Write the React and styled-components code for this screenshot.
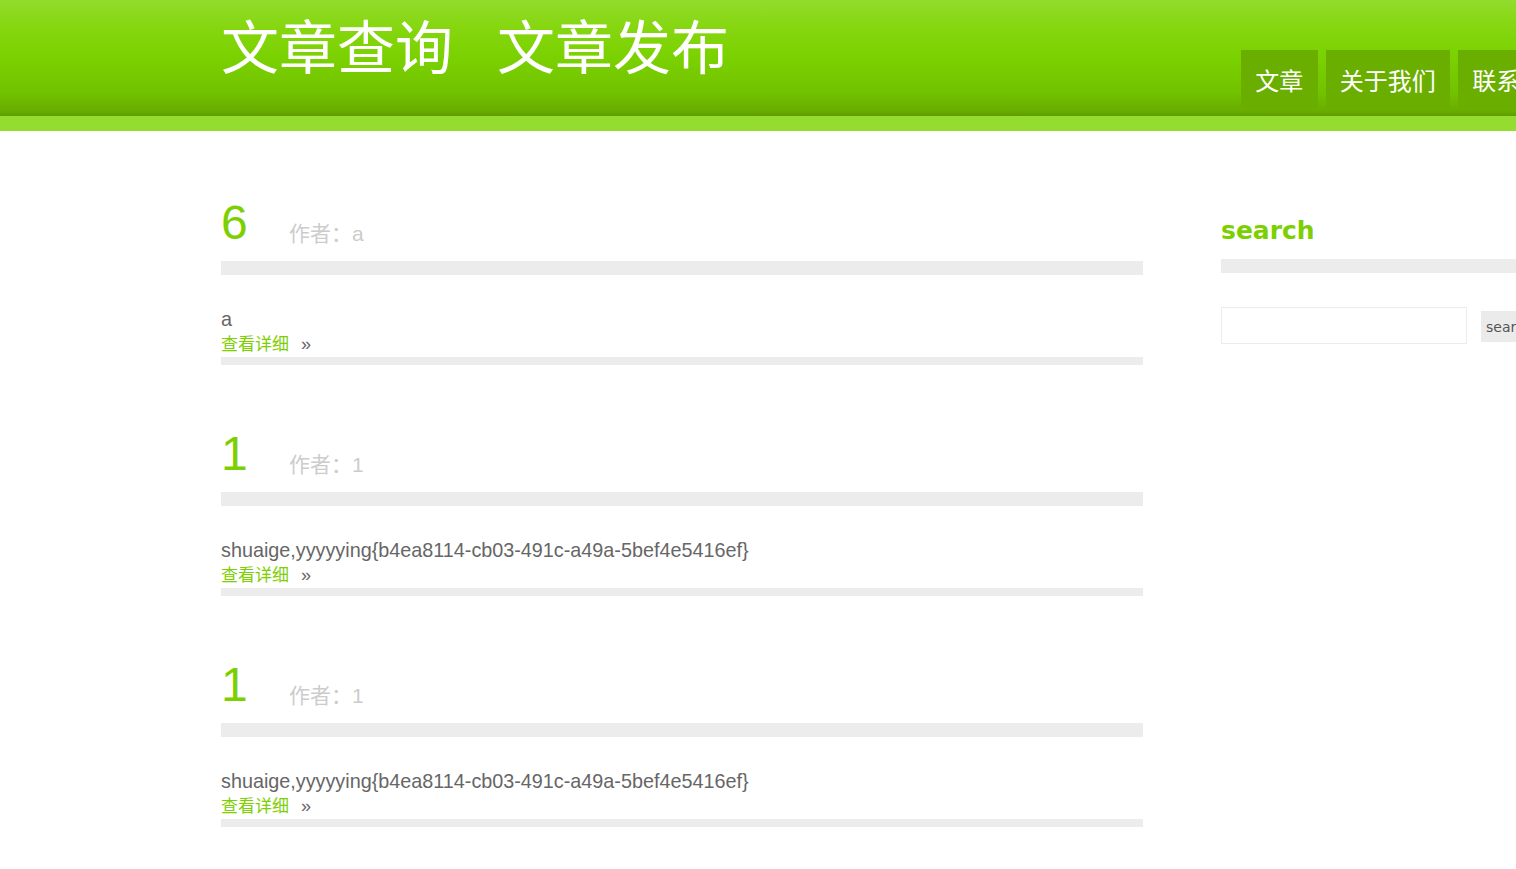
import React from 'react';
import styled, { createGlobalStyle } from 'styled-components';

const posts = [
  { id: 6, author: 'a', body: 'a' },
  { id: 1, author: '1', body: 'shuaige,yyyyying{b4ea8114-cb03-491c-a49a-5bef4e5416ef}' },
  { id: 1, author: '1', body: 'shuaige,yyyyying{b4ea8114-cb03-491c-a49a-5bef4e5416ef}' },
];

const App = () => {
  return (
    <>
      <GlobalStyle />
      <Header>
        <HeaderInner>
          <Brand>
            <BrandLink>文章查询</BrandLink>
            <BrandLink>文章发布</BrandLink>
          </Brand>
          <Nav>
            <NavItem>文章</NavItem>
            <NavItem>关于我们</NavItem>
            <NavItem>联系我们</NavItem>
          </Nav>
        </HeaderInner>
      </Header>
      <Strip />
      <Page>
        <Main>
          {posts.map((p, i) => (
            <Post key={i}>
              <PostTitle>
                <PostNum>{p.id}</PostNum>
                <Author>作者：{p.author}</Author>
              </PostTitle>
              <Bar />
              <Body>{p.body}</Body>
              <More>
                <MoreLink>查看详细</MoreLink>
                <Arrow>»</Arrow>
              </More>
              <ThinBar />
            </Post>
          ))}
        </Main>
        <Sidebar>
          <SideTitle>search</SideTitle>
          <SideBar />
          <SearchRow>
            <SearchInput />
            <SearchButton>search</SearchButton>
          </SearchRow>
        </Sidebar>
      </Page>
    </>
  );
};

const GlobalStyle = createGlobalStyle`
  html, body {
    margin: 0;
    padding: 0;
    background: #fff;
    overflow-x: hidden;
  }
  body {
    font-family: "Liberation Sans", "Noto Sans CJK SC", sans-serif;
  }
`;

const Header = styled.div`
  height: 116px;
  background: linear-gradient(to bottom, #92dc2c 0%, #85d60e 25%, #7ad100 50%, #72c200 80%, #68ac00 96%, #5e9c00 100%);
  overflow: hidden;
`;

const HeaderInner = styled.div`
  display: flex;
  height: 100%;
  padding-left: 221px;
  width: 1500px;
`;

const Brand = styled.div`
  flex: 0 0 1020px;
  display: flex;
  gap: 44px;
  padding-top: 9px;
`;

const BrandLink = styled.div`
  color: #fff;
  font-family: "Noto Sans CJK SC", sans-serif;
  font-size: 58px;
  line-height: 70px;
`;

const Nav = styled.div`
  display: flex;
  gap: 8px;
  padding-top: 50px;
  height: 60px;
`;

const NavItem = styled.div`
  flex-shrink: 0;
  background: #6aae00;
  color: #fff;
  font-family: "Noto Sans CJK SC", sans-serif;
  font-size: 24px;
  height: 59px;
  line-height: 60px;
  padding: 0 14.25px;
  white-space: nowrap;
`;

const Strip = styled.div`
  height: 15px;
  background: #95dc31;
`;

const Page = styled.div`
  display: flex;
  padding-left: 221px;
  width: 1600px;
`;

const Main = styled.div`
  flex: 0 0 922px;
  padding-top: 62px;
`;

const Post = styled.div`
  margin-bottom: 59px;
`;

const PostTitle = styled.div`
  display: flex;
  align-items: baseline;
  height: 60px;
`;

const PostNum = styled.span`
  color: #7ccf00;
  font-size: 48px;
  line-height: 60px;
  width: 68px;
`;

const Author = styled.span`
  color: #cccccc;
  font-size: 21px;
  position: relative;
  top: 2px;
`;

const Bar = styled.div`
  height: 14px;
  background: #ececec;
  margin-top: 8px;
`;

const Body = styled.div`
  margin-top: 32px;
  color: #666;
  font-size: 19.8px;
  line-height: 24px;
`;

const More = styled.div`
  display: flex;
  align-items: baseline;
  height: 24px;
  line-height: 24px;
`;

const MoreLink = styled.span`
  color: #7ccf00;
  font-family: "Noto Sans CJK SC", sans-serif;
  font-size: 17px;
  margin-right: 12px;
`;

const Arrow = styled.span`
  color: #666;
  font-size: 18px;
`;

const ThinBar = styled.div`
  height: 8px;
  background: #ececec;
  margin-top: 2px;
`;

const Sidebar = styled.div`
  flex-shrink: 0;
  margin-left: 78px;
  width: 340px;
  padding-top: 85px;
`;

const SideTitle = styled.div`
  color: #7ccf00;
  font-family: "DejaVu Sans", sans-serif;
  font-weight: bold;
  font-size: 25px;
  line-height: 30px;
`;

const SideBar = styled.div`
  height: 14px;
  background: #ececec;
  margin-top: 13px;
`;

const SearchRow = styled.div`
  display: flex;
  align-items: flex-start;
  margin-top: 34px;
  gap: 14px;
`;

const SearchInput = styled.input`
  flex-shrink: 0;
  width: 246px;
  height: 37px;
  box-sizing: border-box;
  border: 1px solid #ececec;
  outline: none;
  margin: 0;
`;

const SearchButton = styled.button`
  flex-shrink: 0;
  margin-top: 4px;
  height: 31px;
  border: none;
  background: #ebebeb;
  color: #555;
  font-family: "DejaVu Sans", sans-serif;
  font-size: 14px;
  padding: 0 5px;
  width: 70px;
  text-align: left;
`;

export default App;
